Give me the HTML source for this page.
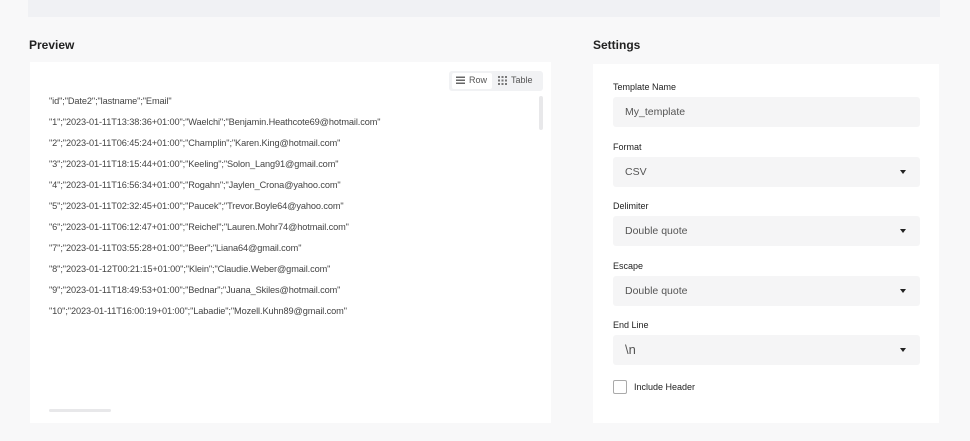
<!DOCTYPE html>
<html><head><style>
*{margin:0;padding:0;box-sizing:border-box}
body{width:970px;height:441px;background:#f8f8f9;font-family:"Liberation Sans",sans-serif;position:relative;overflow:hidden;color:#333}
.a{position:absolute}
.top{left:28px;top:0;width:912px;height:17px;background:#f0f1f4}
h2{position:absolute;font-size:12px;font-weight:bold;color:#222}
.card{background:#fff}
.line{position:absolute;left:49px;font-size:9.2px;color:#444;white-space:nowrap;letter-spacing:-0.1px}
.lbl{position:absolute;left:613px;font-size:9px;color:#222}
.inp{position:absolute;left:613px;width:307px;height:30px;background:#f5f5f6;border-radius:3px;font-size:10.5px;color:#555;padding:9px 0 0 12px}
.inp .car{position:absolute;right:14px;top:13px;width:0;height:0;border-left:3.5px solid transparent;border-right:3.5px solid transparent;border-top:4px solid #222}
</style></head><body>
<div class="a top"></div>
<h2 style="left:29px;top:38px">Preview</h2>
<h2 style="left:593px;top:38px">Settings</h2>
<div class="a card" style="left:30px;top:62px;width:521px;height:361px"></div>
<div class="a card" style="left:593px;top:64px;width:346px;height:359px"></div>
<div class="a" style="left:449px;top:71px;width:94px;height:20px;background:#f1f2f4;border-radius:3px"></div>
<div class="a" style="left:452px;top:73px;width:40px;height:16px;background:#fff;border-radius:2px"></div>
<svg class="a" style="left:456px;top:76px" width="9" height="9"><rect x="0" y="0.5" width="9" height="1.5" fill="#666"/><rect x="0" y="3.5" width="9" height="1.5" fill="#666"/><rect x="0" y="6.5" width="9" height="1.5" fill="#666"/></svg>
<div class="a" style="left:469px;top:75px;font-size:9px;color:#555">Row</div>
<svg class="a" style="left:498px;top:76px" width="9" height="9" fill="#777"><rect x="0" y="0" width="2" height="2"/><rect x="3.5" y="0" width="2" height="2"/><rect x="7" y="0" width="2" height="2"/><rect x="0" y="3.5" width="2" height="2"/><rect x="3.5" y="3.5" width="2" height="2"/><rect x="7" y="3.5" width="2" height="2"/><rect x="0" y="7" width="2" height="2"/><rect x="3.5" y="7" width="2" height="2"/><rect x="7" y="7" width="2" height="2"/></svg>
<div class="a" style="left:511px;top:75px;font-size:9px;color:#555">Table</div>
<div class="a" style="left:539px;top:96px;width:4px;height:34px;background:#e8e8ea;border-radius:2px"></div>
<div class="a" style="left:49px;top:409px;width:62px;height:3px;background:#e8e8ea;border-radius:2px"></div>
<div class="line" style="top:96px">"id";"Date2";"lastname";"Email"</div>
<div class="line" style="top:117px">"1";"2023-01-11T13:38:36+01:00";"Waelchi";"Benjamin.Heathcote69@hotmail.com"</div>
<div class="line" style="top:138px">"2";"2023-01-11T06:45:24+01:00";"Champlin";"Karen.King@hotmail.com"</div>
<div class="line" style="top:159px">"3";"2023-01-11T18:15:44+01:00";"Keeling";"Solon_Lang91@gmail.com"</div>
<div class="line" style="top:180px">"4";"2023-01-11T16:56:34+01:00";"Rogahn";"Jaylen_Crona@yahoo.com"</div>
<div class="line" style="top:201px">"5";"2023-01-11T02:32:45+01:00";"Paucek";"Trevor.Boyle64@yahoo.com"</div>
<div class="line" style="top:222px">"6";"2023-01-11T06:12:47+01:00";"Reichel";"Lauren.Mohr74@hotmail.com"</div>
<div class="line" style="top:243px">"7";"2023-01-11T03:55:28+01:00";"Beer";"Liana64@gmail.com"</div>
<div class="line" style="top:264px">"8";"2023-01-12T00:21:15+01:00";"Klein";"Claudie.Weber@gmail.com"</div>
<div class="line" style="top:285px">"9";"2023-01-11T18:49:53+01:00";"Bednar";"Juana_Skiles@hotmail.com"</div>
<div class="line" style="top:306px">"10";"2023-01-11T16:00:19+01:00";"Labadie";"Mozell.Kuhn89@gmail.com"</div>
<div class="lbl" style="top:82px">Template Name</div>
<div class="inp" style="top:97px">My_template</div>
<div class="lbl" style="top:142px">Format</div>
<div class="inp" style="top:157px">CSV<span class="car"></span></div>
<div class="lbl" style="top:201px">Delimiter</div>
<div class="inp" style="top:216px">Double quote<span class="car"></span></div>
<div class="lbl" style="top:261px">Escape</div>
<div class="inp" style="top:276px">Double quote<span class="car"></span></div>
<div class="lbl" style="top:320px">End Line</div>
<div class="inp" style="top:335px;font-size:13px;padding-top:7px">\n<span class="car"></span></div>
<div class="a" style="left:613px;top:380px;width:14px;height:14px;border:1px solid #aaa;border-radius:2px;background:#fff"></div>
<div class="a" style="left:634px;top:382px;font-size:9px;color:#222">Include Header</div>
</body></html>
